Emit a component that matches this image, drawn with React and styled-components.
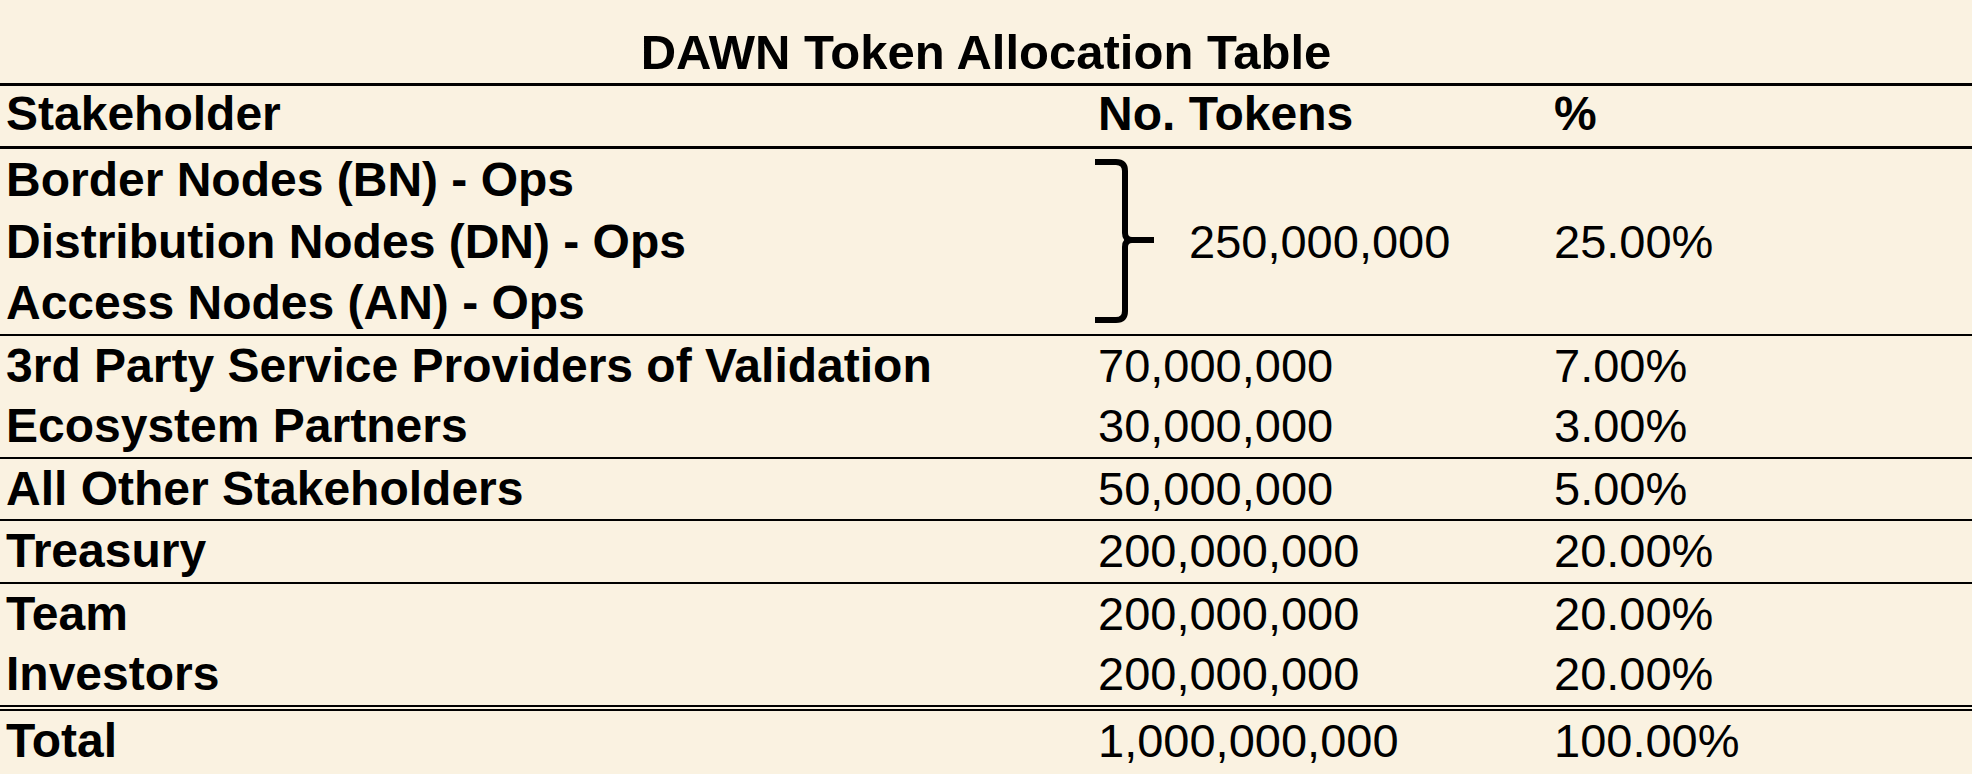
import React from "react";
import styled, { createGlobalStyle } from "styled-components";

const GlobalStyle = createGlobalStyle`
  html, body {
    margin: 0;
    padding: 0;
    background: #faf2e1;
  }
  body {
    font-family: "Liberation Sans", Arial, Helvetica, sans-serif;
    color: #000;
  }
`;

const StPage = styled.div`
  width: 100%;
  min-height: 100vh;
  background: #faf2e1;
  overflow: hidden;
`;

const StTitle = styled.h1`
  margin: 0;
  padding: 26px 0 5px;
  font-size: 49px;
  line-height: 52px;
  font-weight: 700;
  text-align: center;
  border-bottom: 3px solid #000;
`;

const StRow = styled.div`
  display: grid;
  grid-template-columns: 1092px 456px 1fr;
  font-size: 47px;
  line-height: 60.5px;
  white-space: nowrap;
`;

const StHeaderRow = styled(StRow)`
  line-height: 55px;
  padding-bottom: 5px;
  border-bottom: 3px solid #000;
`;

const StCell = styled.div`
  padding-left: 6px;
  font-weight: ${(p) => (p.$bold ? 700 : 400)};
  font-size: ${(p) => (p.$bold ? "48px" : "47px")};
`;

const StSection = styled.div`
  border-top: ${(p) => p.$border || "2px solid #000"};
`;

const StGroup = styled.div`
  display: grid;
  grid-template-columns: 1092px 456px 1fr;
  grid-template-rows: repeat(3, 61.67px);
  font-size: 47px;
  line-height: 61.67px;
  white-space: nowrap;
`;

const StGroupName = styled.div`
  grid-column: 1;
  padding-left: 6px;
  font-size: 48px;
  font-weight: 700;
`;

const StBraceCell = styled.div`
  grid-column: 2;
  grid-row: 1 / span 3;
  display: flex;
  align-items: center;
  gap: 34px;
  padding-left: 3px;
`;

const StSpanCell = styled.div`
  grid-column: 3;
  grid-row: 1 / span 3;
  display: flex;
  align-items: center;
  padding-left: 6px;
`;

const Brace = () => (
  <svg width="60" height="166" viewBox="0 0 60 166" fill="none">
    <path
      d="M0 4 H21 Q30 4 30 13 V75 Q30 82 37 82 H59"
      stroke="#000"
      strokeWidth="6"
    />
    <path
      d="M0 162 H21 Q30 162 30 153 V89 Q30 82 37 82"
      stroke="#000"
      strokeWidth="6"
    />
  </svg>
);

const sections = [
  [
    ["3rd Party Service Providers of Validation", "70,000,000", "7.00%"],
    ["Ecosystem Partners", "30,000,000", "3.00%"],
  ],
  [["All Other Stakeholders", "50,000,000", "5.00%"]],
  [["Treasury", "200,000,000", "20.00%"]],
  [
    ["Team", "200,000,000", "20.00%"],
    ["Investors", "200,000,000", "20.00%"],
  ],
];

const nodes = [
  "Border Nodes (BN) - Ops",
  "Distribution Nodes (DN) - Ops",
  "Access Nodes (AN) - Ops",
];

const App = () => {
  return (
    <StPage>
      <GlobalStyle />
      <StTitle>DAWN Token Allocation Table</StTitle>

      <StHeaderRow>
        <StCell $bold>Stakeholder</StCell>
        <StCell $bold>No. Tokens</StCell>
        <StCell $bold>%</StCell>
      </StHeaderRow>

      <StGroup>
        {nodes.map((name, i) => (
          <StGroupName key={name} style={{ gridRow: i + 1 }}>
            {name}
          </StGroupName>
        ))}
        <StBraceCell>
          <Brace />
          <span>250,000,000</span>
        </StBraceCell>
        <StSpanCell>25.00%</StSpanCell>
      </StGroup>

      {sections.map((rows, i) => (
        <StSection key={i}>
          {rows.map(([name, tokens, pct]) => (
            <StRow key={name}>
              <StCell $bold>{name}</StCell>
              <StCell>{tokens}</StCell>
              <StCell>{pct}</StCell>
            </StRow>
          ))}
        </StSection>
      ))}

      <StSection $border="6px double #000">
        <StRow>
          <StCell $bold>Total</StCell>
          <StCell>1,000,000,000</StCell>
          <StCell>100.00%</StCell>
        </StRow>
      </StSection>
    </StPage>
  );
};

export default App;
